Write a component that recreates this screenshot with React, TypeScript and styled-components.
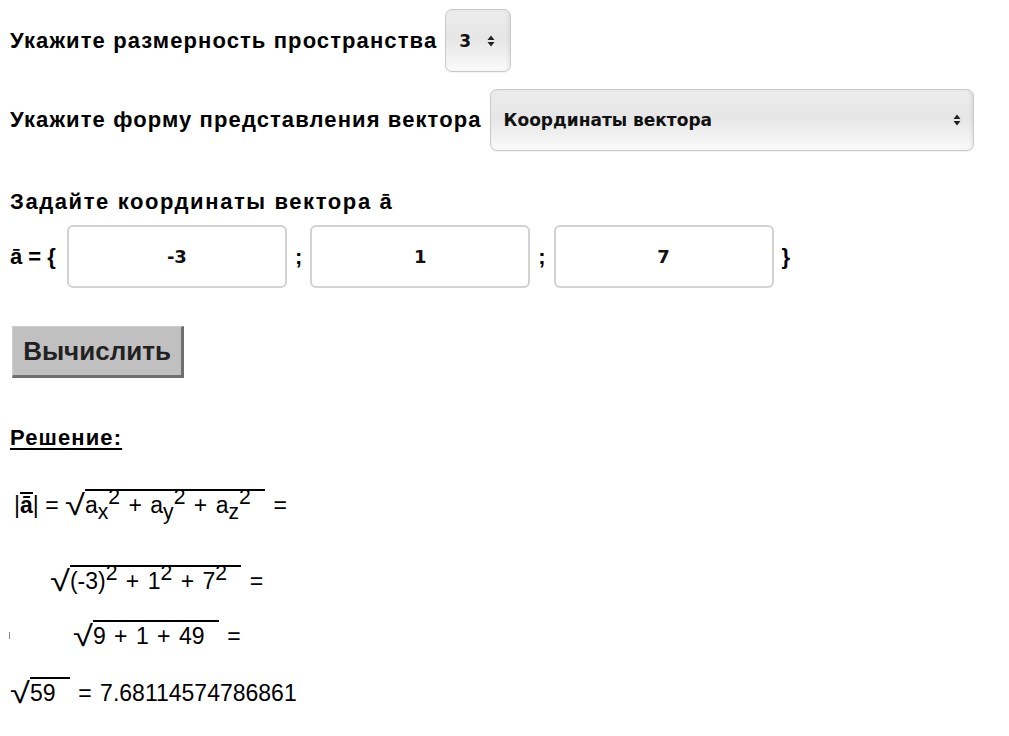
import React from 'react';
import styled, { createGlobalStyle } from 'styled-components';

const GlobalStyle = createGlobalStyle`
  html, body {
    margin: 0;
    padding: 0;
    background: #fff;
  }
  body {
    font-family: "Liberation Sans", Arial, sans-serif;
    color: #000;
  }
`;

const Page = styled.div`
  padding: 9px 0 0 10px;
  display: flex;
  flex-direction: column;
  align-items: flex-start;
`;

const Row = styled.div<{ $top?: number }>`
  display: flex;
  align-items: center;
  margin-top: ${p => p.$top ?? 0}px;
`;

const boldText = `
  font-weight: bold;
  font-size: 22px;
  letter-spacing: 1.1px;
  white-space: nowrap;
`;

const Label = styled.span`
  ${boldText}
  margin-right: 8px;
`;

const SelectBox = styled.div<{ $w: number; $h: number; $arrowRight: number }>`
  position: relative;
  box-sizing: border-box;
  width: ${p => p.$w}px;
  height: ${p => p.$h}px;
  padding: 0 0 0 13px;
  display: flex;
  align-items: center;
  border: 1px solid #c9c9c9;
  border-radius: 7px;
  background: linear-gradient(to bottom, #ececec 0%, #e6e6e6 45%, #f2f2f2 80%, #fbfbfb 100%);
  box-shadow: inset -2px 0 3px rgba(0, 0, 0, 0.06), 0 1px 1px rgba(0, 0, 0, 0.05);
  font-family: "DejaVu Sans", Verdana, sans-serif;
  font-weight: bold;
  font-size: 17px;
  color: #111;

  svg {
    position: absolute;
    right: ${p => p.$arrowRight}px;
    top: 50%;
    transform: translateY(-50%);
  }
`;

const Heading = styled.div<{ $top: number }>`
  ${boldText}
  letter-spacing: 1.6px;
  margin-top: ${p => p.$top}px;
`;

const Brace = styled.span<{ $gap?: number }>`
  ${boldText}
  letter-spacing: 0;
  margin: 0 ${p => p.$gap ?? 9}px;
`;

const Spacer = styled.span<{ $w: number }>`
  display: inline-block;
  width: ${p => p.$w}px;
`;

const CoordInput = styled.input`
  box-sizing: border-box;
  width: 220px;
  height: 63px;
  border: 2px solid #d2d2d2;
  border-radius: 6px;
  background: #fff;
  text-align: center;
  font-family: "DejaVu Sans", Verdana, sans-serif;
  font-weight: bold;
  font-size: 18px;
  color: #111;
  outline: none;
`;

const CalcButton = styled.button`
  margin-top: 38px;
  margin-left: 2px;
  box-sizing: border-box;
  width: 172px;
  height: 52px;
  padding: 0;
  background: #c0c0c0;
  border-style: solid;
  border-width: 1px 3px 3px 1px;
  border-color: #cfcfcf #6f6f6f #6f6f6f #cfcfcf;
  font-family: "Liberation Sans", Arial, sans-serif;
  font-weight: bold;
  font-size: 26px;
  color: #222;
`;

const SolutionTitle = styled.div`
  ${boldText}
  margin-top: 47px;
  text-decoration: underline;
  text-underline-offset: 3px;
`;

const Formula = styled.div<{ $top: number; $indent: number }>`
  margin-top: ${p => p.$top}px;
  padding-left: ${p => p.$indent}px;
  font-size: 23px;
  line-height: 30px;
  white-space: pre;
  word-spacing: 2px;
  display: flex;
  align-items: flex-end;
`;

const Prefix = styled.span`
  word-spacing: 0;
`;

const Abs = styled.span`
  font-weight: bold;
`;

const Bar = styled.span`
  display: inline-block;
  border-top: 2px solid #000;
  line-height: 22px;
`;

const RootWrap = styled.span`
  display: inline-flex;
  align-items: flex-end;
`;

const RootSign = styled.span`
  display: inline-block;
  font-size: 29px;
  line-height: 32px;
  transform: scaleX(1.25);
  transform-origin: left bottom;
  margin-right: 4px;
  margin-bottom: -1px;
`;

const Radicand = styled.span`
  display: inline-block;
  border-top: 2px solid #000;
  line-height: 29px;
  padding-right: 6px;
`;

const Sup = styled.sup`
  font-size: 0.92em;
  line-height: 0;
  vertical-align: 0.42em;
`;

const Sub = styled.sub`
  font-size: 0.92em;
  line-height: 0;
  vertical-align: -0.3em;
`;

const Tick = styled.span`
  display: inline-block;
  width: 1px;
  height: 7px;
  background: #888;
  margin: 0 0 12px -1px;
`;

const Arrows = () => (
  <svg width="8" height="12" viewBox="0 0 8 12">
    <path d="M4 0.5 L7.5 5 L0.5 5 Z" fill="#222" />
    <path d="M4 11.5 L7.5 7 L0.5 7 Z" fill="#222" />
  </svg>
);

const Root: React.FC<{ children: React.ReactNode }> = ({ children }) => (
  <RootWrap>
    <RootSign>√</RootSign>
    <Radicand>{children}</Radicand>
  </RootWrap>
);

export default function App() {
  return (
    <>
      <GlobalStyle />
      <Page>
        <Row>
          <Label>Укажите размерность пространства</Label>
          <SelectBox $w={66} $h={63} $arrowRight={15}>
            3
            <Arrows />
          </SelectBox>
        </Row>

        <Row $top={17}>
          <Label>Укажите форму представления вектора</Label>
          <SelectBox $w={484} $h={62} $arrowRight={12}>
            Координаты вектора
            <Arrows />
          </SelectBox>
        </Row>

        <Heading $top={38}>Задайте координаты вектора ā</Heading>

        <Row $top={10}>
          <Brace $gap={0}>ā = {'{'}</Brace>
          <Spacer $w={11} />
          <CoordInput defaultValue="-3" />
          <Brace $gap={8}>;</Brace>
          <CoordInput defaultValue="1" />
          <Brace $gap={8}>;</Brace>
          <CoordInput defaultValue="7" />
          <Brace $gap={8}>{'}'}</Brace>
        </Row>

        <CalcButton>Вычислить</CalcButton>

        <SolutionTitle>Решение:</SolutionTitle>

        <Formula $top={38} $indent={4}>
          <Prefix>|<Abs><Bar>ā</Bar></Abs>| = </Prefix>
          <Root>
            a<Sub>x</Sub><Sup>2</Sup> + a<Sub>y</Sub><Sup>2</Sup> + a<Sub>z</Sub><Sup>2</Sup>{' '}
          </Root>
          <span> = </span>
        </Formula>

        <Formula $top={45} $indent={40}>
          <Root>
            (-3)<Sup>2</Sup> + 1<Sup>2</Sup> + 7<Sup>2</Sup>{' '}
          </Root>
          <span> = </span>
        </Formula>

        <Formula $top={24} $indent={0}>
          <Tick />
          <Spacer $w={63} />
          <Root>9 + 1 + 49 </Root>
          <span> = </span>
        </Formula>

        <Formula $top={26} $indent={0}>
          <Root>59 </Root>
          <span> = 7.68114574786861</span>
        </Formula>
      </Page>
    </>
  );
}
